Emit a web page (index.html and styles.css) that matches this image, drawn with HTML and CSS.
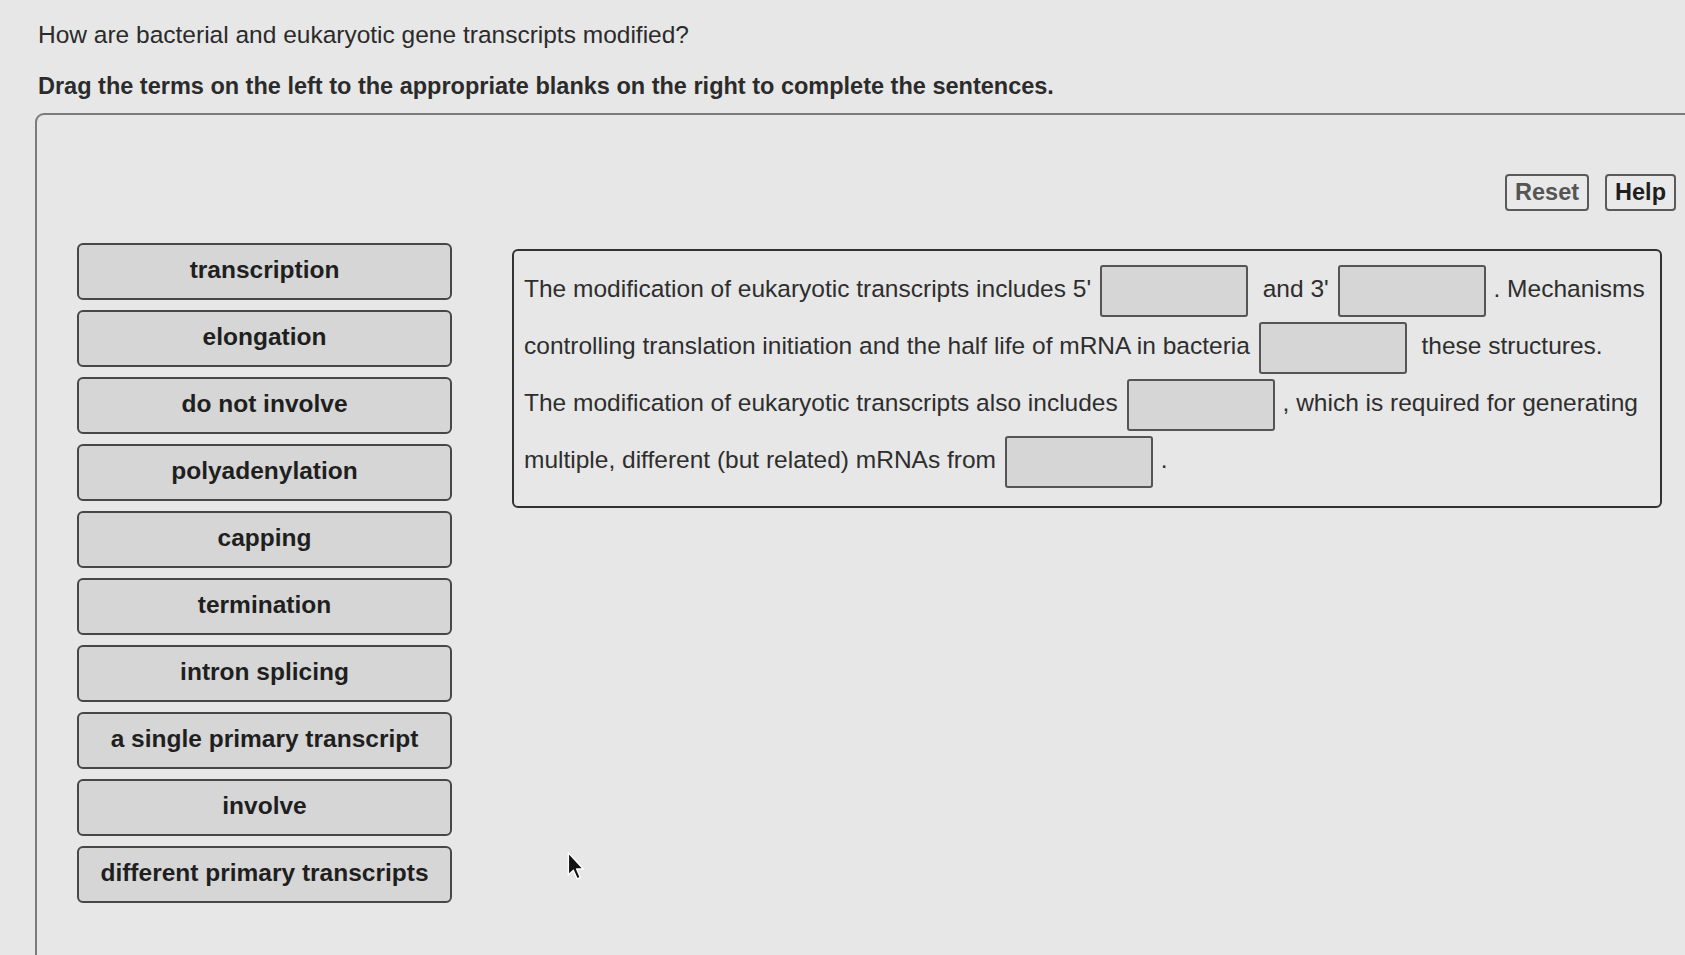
FILE: index.html
```html
<!DOCTYPE html>
<html lang="en">

<head>
    <meta charset="UTF-8" />
    <meta name="viewport" content="width=device-width, initial-scale=1.0" />
    <title>Gene Transcript Modification</title>
    <link rel="stylesheet" href="styles.css">
</head>

<body>
    <div class="question">
        <p class="prompt">How are bacterial and eukaryotic gene transcripts modified?</p>
        <p class="instructions">Drag the terms on the left to the appropriate blanks on the right to complete the sentences.</p>
    </div>

    <div class="activity">
        <div class="toolbar">
            <button class="tool-btn reset">Reset</button>
            <button class="tool-btn help">Help</button>
        </div>

        <div class="workspace">
            <div class="terms">
                <div class="term">transcription</div>
                <div class="term">elongation</div>
                <div class="term">do not involve</div>
                <div class="term">polyadenylation</div>
                <div class="term">capping</div>
                <div class="term">termination</div>
                <div class="term">intron splicing</div>
                <div class="term">a single primary transcript</div>
                <div class="term">involve</div>
                <div class="term">different primary transcripts</div>
            </div>

            <div class="sentences">
                <p>
                    The modification of eukaryotic transcripts includes 5' <span class="blank"></span> and 3' <span class="blank"></span>. Mechanisms<br>
                    controlling translation initiation and the half life of mRNA in bacteria <span class="blank"></span> these structures.<br>
                    The modification of eukaryotic transcripts also includes <span class="blank"></span>, which is required for generating<br>
                    multiple, different (but related) mRNAs from <span class="blank"></span>.
                </p>
            </div>
        </div>
    </div>

    <!-- mouse pointer -->
    <svg class="pointer" width="18" height="30" viewBox="0 0 13 21">
        <path d="M1 1 L1 17 L4.6 13.6 L7.3 19.8 L9.6 18.8 L6.9 12.7 L11.8 12.7 Z" fill="#111" stroke="#fff" stroke-width="1" stroke-linejoin="round" />
    </svg>
</body>

</html>
```

FILE: styles.css
```css
body {
    margin: 0;
    background-color: #e7e7e7;
    font-family: "Liberation Sans", Arial, sans-serif;
    color: #2b2b2b;
    overflow: hidden;
    height: 955px;
}

.question {
    padding: 21px 0 0 38px;
}

.prompt {
    margin: 0;
    font-size: 24.5px;
    line-height: 28px;
}

.instructions {
    margin: 23px 0 0 0;
    font-size: 23.5px;
    font-weight: bold;
    line-height: 28px;
}

/* panel runs off the right and bottom of the window */
.activity {
    margin: 13px 0 0 35px;
    width: 1665px;
    height: 843px;
    border: 2px solid #7c7c7c;
    border-bottom: none;
    border-radius: 9px 9px 0 0;
    box-sizing: border-box;
}

.toolbar {
    display: flex;
    justify-content: flex-end;
    gap: 16px;
    padding: 59px 22px 0 0;
}

.tool-btn {
    height: 37px;
    padding: 0 8px;
    background-color: #e9e9e9;
    border: 2px solid #5a5a5a;
    border-radius: 4px;
    font-family: "Liberation Sans", Arial, sans-serif;
    font-size: 23.5px;
    font-weight: bold;
    cursor: pointer;
}

.reset {
    color: #555;
}

.help {
    color: #1e1e1e;
}

.workspace {
    display: flex;
    align-items: flex-start;
    gap: 60px;
    padding: 32px 36px 0 40px;
}

.terms {
    display: flex;
    flex-direction: column;
    gap: 10px;
    width: 375px;
    flex-shrink: 0;
}

.term {
    height: 57px;
    display: flex;
    justify-content: center;
    align-items: center;
    box-sizing: border-box;
    padding-bottom: 4px;
    background-color: #d6d6d6;
    border: 2px solid #474747;
    border-radius: 6px;
    font-size: 24.5px;
    font-weight: bold;
    color: #1f1f1f;
    cursor: grab;
}

.sentences {
    flex: 1;
    margin-top: 6px;
    border: 2px solid #333;
    border-radius: 6px;
    padding: 9px 4px 18px 10px;
}

.sentences p {
    margin: 0;
    font-size: 24.5px;
    line-height: 57px;
    color: #2e2e2e;
}

.blank {
    display: inline-block;
    width: 148px;
    height: 52px;
    margin: 0 8px 0 2px;
    box-sizing: border-box;
    vertical-align: middle;
    background-color: #d6d6d6;
    border: 2px solid #555;
    border-radius: 3px;
}

.pointer {
    position: absolute;
    left: 567px;
    top: 851px;
}
```
